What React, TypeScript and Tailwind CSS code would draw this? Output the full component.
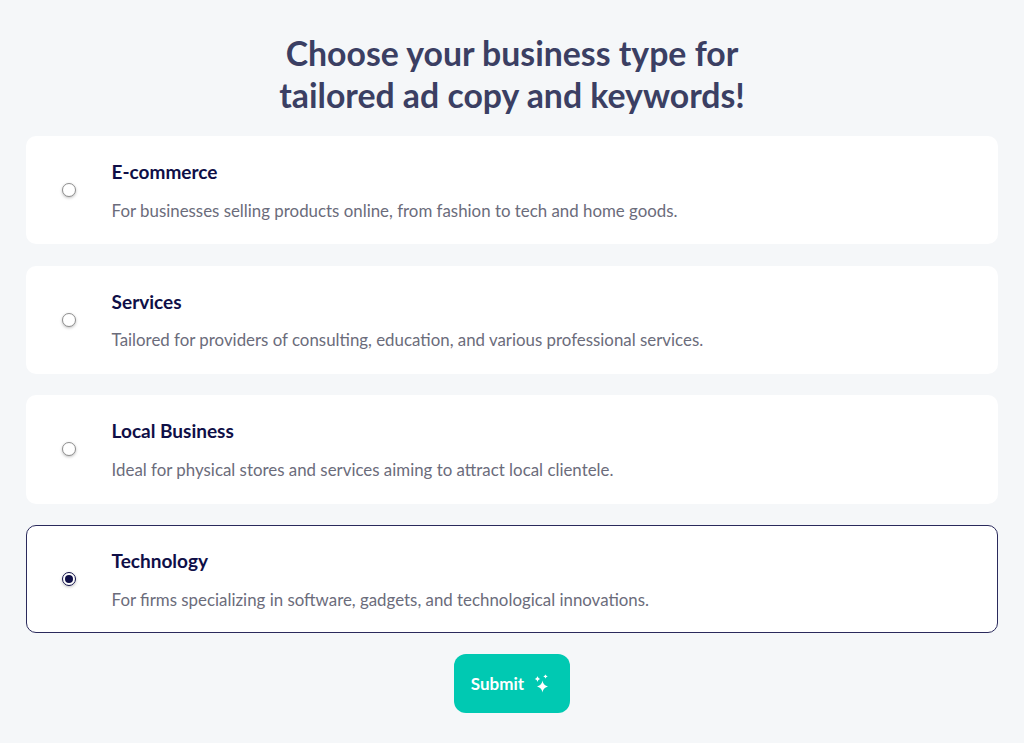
const options = [
  { title: 'E-commerce', text: 'For businesses selling products online, from fashion to tech and home goods.' },
  { title: 'Services', text: 'Tailored for providers of consulting, education, and various professional services.' },
  { title: 'Local Business', text: 'Ideal for physical stores and services aiming to attract local clientele.' },
  { title: 'Technology', text: 'For firms specializing in software, gadgets, and technological innovations.', selected: true },
]

function Sparkles() {
  return (
    <svg width="18" height="20" viewBox="0 0 18 20" fill="white">
      <path d="M8.5 7.5 C9.2 10.8 10.4 12.2 14 13.5 C10.4 14.8 9.2 16.2 8.5 19.5 C7.8 16.2 6.6 14.8 3 13.5 C6.6 12.2 7.8 10.8 8.5 7.5 Z" />
      <path d="M3.5 3 C3.9 4.6 4.5 5.4 6.3 6 C4.5 6.6 3.9 7.4 3.5 9 C3.1 7.4 2.5 6.6 0.7 6 C2.5 5.4 3.1 4.6 3.5 3 Z" />
      <path d="M11.5 1.3 C11.8 2.5 12.3 3 13.7 3.5 C12.3 4 11.8 4.5 11.5 5.7 C11.2 4.5 10.7 4 9.3 3.5 C10.7 3 11.2 2.5 11.5 1.3 Z" />
    </svg>
  )
}

export default function App() {
  return (
    <div className="flex h-[743px] flex-col items-center overflow-hidden bg-[#f5f7f9] px-[26px] pt-[32px] font-['Lato',sans-serif]">
      <h1 className="text-center text-[33.8px] leading-[42px] font-bold text-[#3b3f63]">
        Choose your business type for
        <br />
        tailored ad copy and keywords!
      </h1>
      <div className="mt-[20px] flex w-full flex-col gap-[21.2px]">
        {options.map((o) => (
          <div
            key={o.title}
            className={
              o.selected
                ? 'flex h-[108.4px] items-center rounded-[10px] border border-[#2a2a5c] bg-white pl-[35px]'
                : 'flex h-[108.4px] items-center rounded-[10px] border border-transparent bg-white pl-[35px]'
            }
          >
            {o.selected ? (
              <span className="flex h-[14px] w-[14px] items-center justify-center rounded-full border-[1.5px] border-[#0f0f47] shadow-[0_1px_3px_rgba(0,0,0,0.25)]">
                <span className="h-[8px] w-[8px] rounded-full bg-[#0f0f47]" />
              </span>
            ) : (
              <span className="h-[14px] w-[14px] rounded-full border-[1.5px] border-[#8f8f8f] bg-white shadow-[0_1px_3px_rgba(0,0,0,0.25)]" />
            )}
            <div className="ml-[35.6px] pt-[1.5px]">
              <div className="text-[19px] leading-[26px] font-bold text-[#0f0f47]">{o.title}</div>
              <div className="mt-[13.7px] text-[16.88px] leading-[24px] text-[#6b6c7b]">{o.text}</div>
            </div>
          </div>
        ))}
      </div>
      <button className="mt-[20.8px] flex h-[59px] w-[116px] items-center justify-center gap-[10px] rounded-[12px] bg-[#00c9b2] pr-[1px] text-[17px] font-bold text-white">
        Submit
        <Sparkles />
      </button>
    </div>
  )
}
